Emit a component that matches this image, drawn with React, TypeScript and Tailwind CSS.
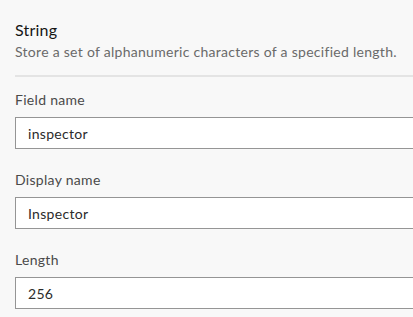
import React from 'react';

interface FieldProps {
  label: string;
  value: string;
}

function Field({ label, value }: FieldProps) {
  return (
    <div className="flex flex-col">
      <label className="text-[14px] leading-[20px] tracking-[0.3px] text-[#4a4a4a] mb-[7px]">{label}</label>
      <input
        readOnly
        value={value}
        className="h-[32px] w-[440px] bg-white border border-[#959595] px-[12px] text-[14px] tracking-[0.3px] text-[#2b2b2b] outline-none"
        style={{ fontFamily: 'inherit' }}
      />
    </div>
  );
}

export default function App() {
  return (
    <div
      className="w-[413px] h-[317px] overflow-hidden bg-[#f8f8f8]"
      style={{ fontFamily: 'Lato, "Open Sans", sans-serif' }}
    >
      <div className="w-[460px] pl-[15px] pt-[20px]">
        {/* Header */}
        <div className="pb-[13px] border-b-2 border-[#e4e4e4]">
          <h2 className="text-[16px] leading-[20px] tracking-[0.2px] text-[#151515]">String</h2>
          <p className="text-[14px] leading-[20px] tracking-[0.28px] text-[#6a6a6a] mt-[2px]">
            Store a set of alphanumeric characters of a specified length.
          </p>
        </div>

        {/* Fields */}
        <div className="flex flex-col gap-[21px] pt-[13px]">
          <Field label="Field name" value="inspector" />
          <Field label="Display name" value="Inspector" />
          <Field label="Length" value="256" />
        </div>
      </div>
    </div>
  );
}
